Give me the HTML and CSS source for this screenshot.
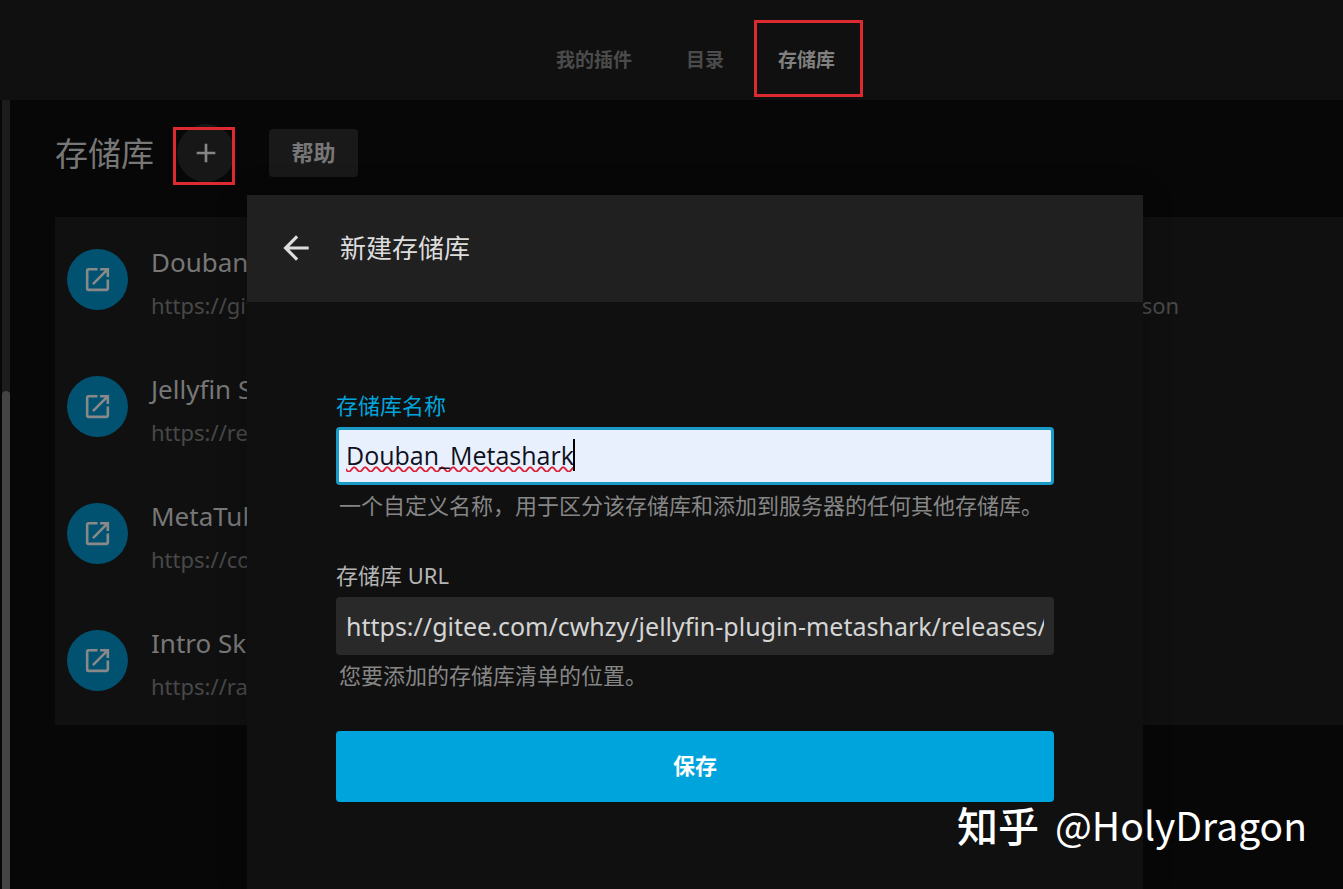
FILE: index.html
```
<!DOCTYPE html>
<html lang="zh-CN">
<head>
    <meta charset="UTF-8">
    <meta name="viewport" content="width=device-width, initial-scale=1.0">
    <title>存储库</title>
    <link rel="stylesheet" href="styles.css">
</head>
<body>
    <svg class="sprite" aria-hidden="true">
        <symbol id="open" viewBox="0 0 24 24">
            <path d="M19 19H5V5h7V3H5a2 2 0 0 0-2 2v14a2 2 0 0 0 2 2h14c1.100 0 2-.9 2-2v-7h-2v7zM14 3v2h3.590l-9.830 9.830 1.410 1.410L19 6.410V10h2V3h-7z"/>
        </symbol>
        <symbol id="add" viewBox="0 0 24 24">
            <path d="M19 13h-6v6h-2v-6H5v-2h6V5h2v6h6v2z"/>
        </symbol>
        <symbol id="back" viewBox="0 0 24 24">
            <path d="M20 11H7.830l5.590-5.590L12 4l-8 8 8 8 1.410-1.410L7.830 13H20v-2z"/>
        </symbol>
    </svg>
    <header class="tabs">
        <nav>
            <a href="#plugins">我的插件</a>
            <a href="#catalog">目录</a>
            <a class="active" href="#repositories">存储库</a>
        </nav>
    </header>
    <div class="page">
        <div class="scrollbar"><div class="thumb"></div></div>
        <main>
            <div class="heading">
                <h1>存储库</h1>
                <button class="add" type="button" aria-label="添加"><svg><use href="#add"/></svg></button>
                <button class="help" type="button">帮助</button>
            </div>
            <ul class="list">
                <li>
                    <a class="open" href="#douban" aria-label="打开"><svg><use href="#open"/></svg></a>
                    <div>
                        <h3>Douban</h3>
                        <p>https://gitee.com/cwhzy/jellyfin-plugin-metashark/releases/download/latest/manifest_mirror_c.json</p>
                    </div>
                </li>
                <li>
                    <a class="open" href="#stable" aria-label="打开"><svg><use href="#open"/></svg></a>
                    <div>
                        <h3>Jellyfin Stable</h3>
                        <p>https://repo.org</p>
                    </div>
                </li>
                <li>
                    <a class="open" href="#metatube" aria-label="打开"><svg><use href="#open"/></svg></a>
                    <div>
                        <h3>MetaTube</h3>
                        <p>https://code.org</p>
                    </div>
                </li>
                <li>
                    <a class="open" href="#intro" aria-label="打开"><svg><use href="#open"/></svg></a>
                    <div>
                        <h3>Intro Skipper</h3>
                        <p>https://raw.org</p>
                    </div>
                </li>
            </ul>
        </main>
    </div>
    <div class="overlay">
        <section class="dialog" role="dialog" aria-labelledby="dialog-title">
            <div class="dialog-header">
                <button class="back" type="button" aria-label="返回"><svg><use href="#back"/></svg></button>
                <h2 id="dialog-title">新建存储库</h2>
            </div>
            <form>
                <div class="field focused">
                    <label for="name">存储库名称</label>
                    <div class="control">
                        <input id="name" type="text" value="Douban_Metashark">
                        <span class="caret"></span>
                    </div>
                    <p>一个自定义名称，用于区分该存储库和添加到服务器的任何其他存储库。</p>
                </div>
                <div class="field">
                    <label for="url">存储库 URL</label>
                    <div class="control">
                        <input id="url" type="text" value="https://gitee.com/cwhzy/jellyfin-plugin-metashark/releases/">
                    </div>
                    <p>您要添加的存储库清单的位置。</p>
                </div>
                <button class="save" type="button">保存</button>
            </form>
        </section>
    </div>
    <div class="watermark"><b>知乎</b><span>@HolyDragon</span></div>
</body>
</html>
```

FILE: styles.css
```
* {
    box-sizing: border-box;
}
body {
    margin: 0;
    height: 100vh;
    display: flex;
    flex-direction: column;
    position: relative;
    overflow: hidden;
    background-color: #070707;
    color: #777777;
    font-family: "Noto Sans", "Noto Sans CJK SC", sans-serif;
    font-size: 22px;
}
h1, h2, h3, p, ul {
    margin: 0;
    padding: 0;
    font-weight: 400;
}
button, input {
    border: 0;
    font-family: inherit;
}
a {
    text-decoration: none;
}
svg {
    display: block;
    fill: currentColor;
}
.sprite {
    position: absolute;
    width: 0;
    height: 0;
}

.tabs {
    flex: none;
    height: 100px;
    padding: 20px 0 0 48px;
    background-color: #101010;
}
.tabs nav {
    display: flex;
    justify-content: center;
}
.tabs a {
    position: relative;
    padding: 0 27px;
    line-height: 80px;
    font-size: 19px;
    font-weight: 700;
    color: #4b4b4b;
}
.tabs .active {
    color: #808080;
}
.tabs .active::after,
.add::after {
    content: '';
    position: absolute;
    border: 3px solid #dc2a30;
}
.tabs .active::after {
    inset: 0 -1px 3px 3px;
}

.page {
    flex: 1;
    min-height: 0;
    display: flex;
}
.scrollbar {
    width: 8px;
    margin-left: 2px;
    padding-top: 291px;
    background-color: #1c1c1c;
}
.thumb {
    height: 100%;
    border-radius: 4px 4px 0 0;
    background-color: #444444;
}
main {
    flex: 1;
    padding: 25px 0 0 45px;
}
.heading {
    display: flex;
    align-items: center;
    height: 56px;
    margin-bottom: 36px;
}
h1 {
    padding-top: 2px;
    font-size: 33px;
    line-height: 56px;
}
.add {
    position: relative;
    display: grid;
    place-items: center;
    width: 58px;
    height: 58px;
    margin: 0 34px 0 23px;
    padding: 0;
    border-radius: 50%;
    background-color: #171717;
    color: #858585;
}
.add::after {
    inset: 3px 0 -3px -4px;
}
.add svg {
    width: 32px;
    height: 32px;
}
.help {
    width: 89px;
    height: 48px;
    padding: 0 0 4px;
    border-radius: 4px;
    background-color: #191919;
    color: #777777;
    font-size: 22px;
    font-weight: 700;
}
.list {
    list-style: none;
    background-color: #101010;
}
.list li {
    display: flex;
    align-items: center;
    height: 127px;
    padding: 0 12px 2px;
    gap: 23px;
}
.list div {
    padding-top: 6px;
}
.open {
    display: grid;
    place-items: center;
    width: 61px;
    height: 61px;
    border-radius: 50%;
    background-color: #005270;
    color: #898989;
}
.open svg {
    width: 31px;
    height: 31px;
}
.list h3 {
    font-size: 26px;
    line-height: 44px;
    color: #777777;
}
.list p {
    line-height: 42px;
    color: #484848;
    white-space: nowrap;
}

.overlay {
    position: absolute;
    inset: 195px 0 0 47px;
    display: flex;
    justify-content: center;
}
.dialog {
    width: 896px;
    background-color: #101010;
    box-shadow: 0 0 30px #00000033;
}
.dialog-header {
    display: flex;
    align-items: center;
    gap: 25px;
    height: 107px;
    padding: 0 0 1px 30px;
    background-color: #202020;
    color: #dddddd;
}
.back {
    padding: 0;
    background: none;
    color: inherit;
}
.back svg {
    width: 38px;
    height: 38px;
}
h2 {
    font-size: 26px;
    line-height: 36px;
}
form {
    padding: 85px 89px 0;
}
.field {
    margin-bottom: 34px;
}
.field label {
    display: block;
    padding-bottom: 4px;
    line-height: 36px;
    color: #b4b4b4;
}
.focused label {
    color: #00a4dc;
}
.control {
    position: relative;
}
.control input {
    display: block;
    width: 100%;
    height: 58px;
    padding: 0 10px;
    outline: 0;
    border-radius: 4px;
    background-color: #292929;
    color: #d5d5d5;
    font-size: 25px;
}
.control #name {
    padding: 0 7px 2px;
    border: 3px solid #1b9ac8;
    background-color: #e8f0fe;
    color: #101020;
    font-family: "Open Sans", sans-serif;
    text-decoration: underline wavy #dc2438 2px;
    text-decoration-skip-ink: none;
}
.caret {
    position: absolute;
    left: 237px;
    top: 12px;
    width: 2px;
    height: 32px;
    background-color: #000000;
}
.field p {
    padding: 3px 3px 1px;
    line-height: 34px;
    color: #868686;
}
.save {
    width: 100%;
    height: 71px;
    margin-top: 4px;
    padding: 0 0 6px;
    border-radius: 4px;
    background-color: #00a4dc;
    color: #ffffff;
    font-size: 22px;
    font-weight: 700;
}

.watermark {
    position: absolute;
    right: 36px;
    bottom: 35px;
    display: flex;
    gap: 16px;
    color: #ffffff;
    font-family: "Noto Sans CJK SC", sans-serif;
    font-size: 39px;
    line-height: 60px;
}
.watermark b {
    font-size: 41px;
    font-weight: 500;
}
```
